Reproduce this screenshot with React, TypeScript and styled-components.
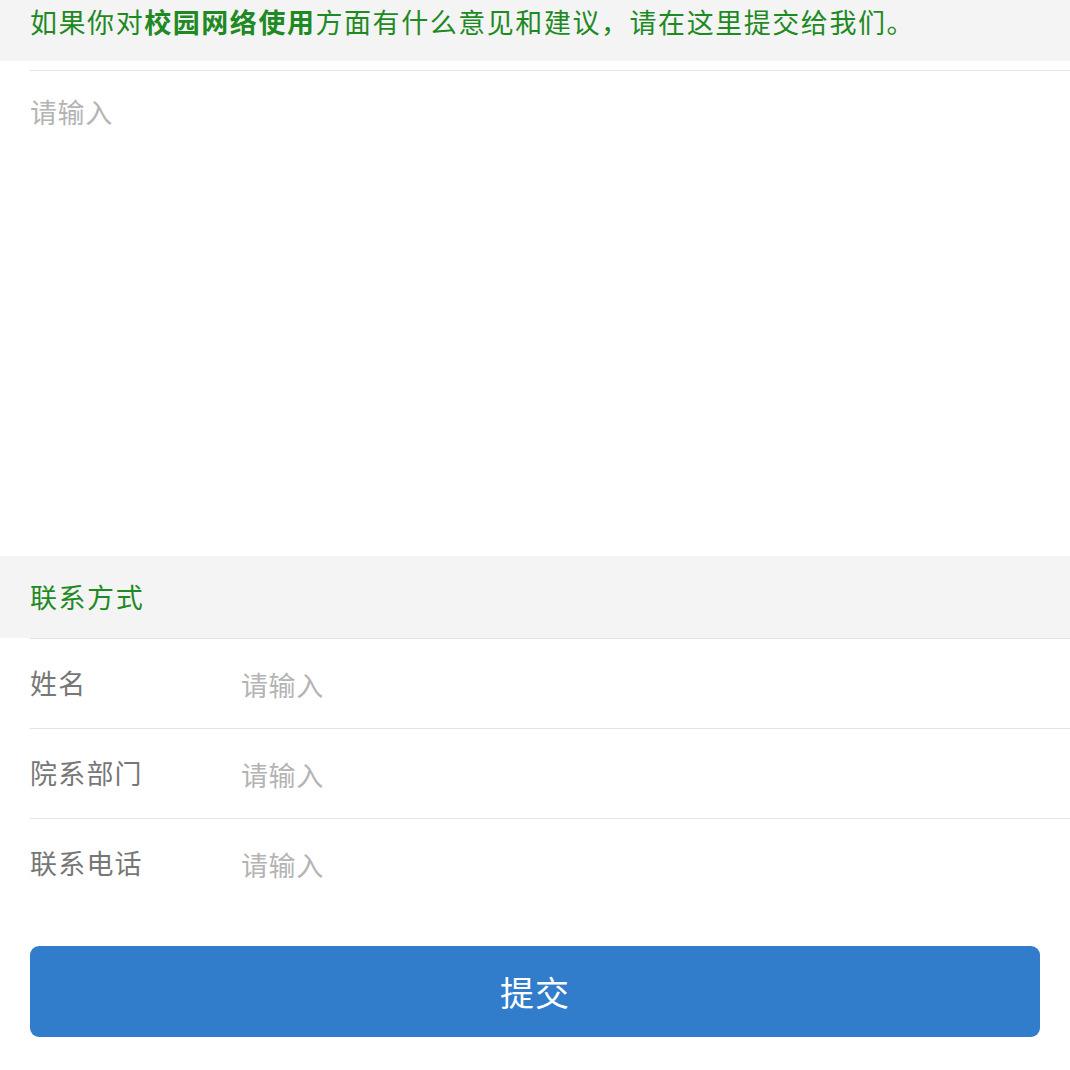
import React from "react";
import styled, { createGlobalStyle } from "styled-components";

const Global = createGlobalStyle`
  html, body { margin: 0; padding: 0; background: #ffffff; }
  body { font-family: "Noto Sans CJK SC", "Noto Sans", sans-serif; }
  * { box-sizing: border-box; }
`;

const Page = styled.div`
  width: 1070px;
  height: 1070px;
  display: flex;
  flex-direction: column;
  background: #fff;
  overflow: hidden;
`;

const Band = styled.div<{ $h: number; $pt: number }>`
  height: ${(p) => p.$h}px;
  padding: ${(p) => p.$pt}px 0 0 30px;
  background: #f4f4f4;
  color: #1f8a24;
  font-size: 27px;
  line-height: 40px;
  letter-spacing: 1.55px;
  white-space: nowrap;
`;

const Strong = styled.b`
  font-weight: 700;
`;

const Divider = styled.div<{ $mt?: number }>`
  margin-top: ${(p) => p.$mt ?? 0}px;
  margin-left: 30px;
  height: 1px;
  background: #e3e3e3;
`;

const TextArea = styled.div`
  height: 485px;
  padding: 21px 0 0 30px;
  font-size: 27px;
  line-height: 40px;
  letter-spacing: 0.6px;
  color: #b4b4b4;
`;

const Rows = styled.div`
  display: flex;
  flex-direction: column;
`;

const Row = styled.div<{ $last?: boolean }>`
  height: 90px;
  margin-left: 30px;
  display: flex;
  align-items: center;
  border-bottom: ${(p) => (p.$last ? "none" : "1px solid #e3e3e3")};
`;

const Label = styled.div`
  width: 211px;
  font-size: 27px;
  color: #777777;
  letter-spacing: 1.2px;
  margin-top: -3px;
`;

const Placeholder = styled.div`
  font-size: 27px;
  color: #b4b4b4;
  letter-spacing: 0.6px;
  margin-top: 1px;
`;

const Button = styled.button`
  margin: 37px 0 0 30px;
  width: 1010px;
  height: 91px;
  border: none;
  border-radius: 9px;
  background: #317dcc;
  color: #ffffff;
  font-family: "Noto Sans CJK SC", "Noto Sans", sans-serif;
  font-size: 34px;
  letter-spacing: 1px;
  display: flex;
  align-items: center;
  justify-content: center;
  padding: 0;
`;

const fields = ["姓名", "院系部门", "联系电话"];

export default function App() {
  return (
    <Page>
      <Global />
      <Band $h={61} $pt={2}>
        如果你对<Strong>校园网络使用</Strong>方面有什么意见和建议，请在这里提交给我们。
      </Band>
      <Divider $mt={9} />
      <TextArea>请输入</TextArea>
      <Band $h={82} $pt={21}>联系方式</Band>
      <Divider />
      <Rows>
        {fields.map((f, i) => (
          <Row key={f} $last={i === fields.length - 1}>
            <Label>{f}</Label>
            <Placeholder>请输入</Placeholder>
          </Row>
        ))}
      </Rows>
      <Button>提交</Button>
    </Page>
  );
}
